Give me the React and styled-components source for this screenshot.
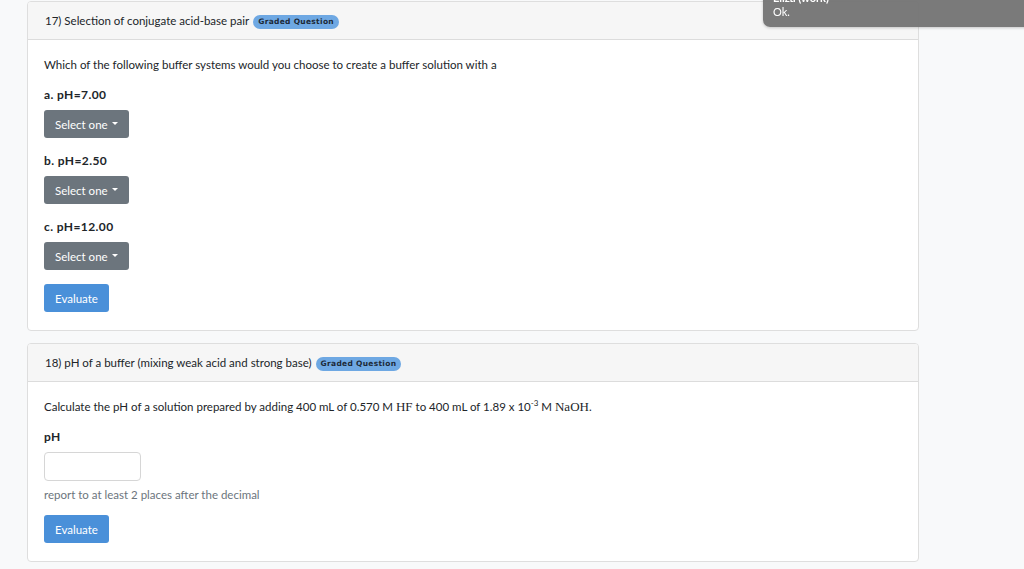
import React from "react";
import styled, { createGlobalStyle } from "styled-components";

const GlobalStyle = createGlobalStyle`
  html, body {
    margin: 0;
    padding: 0;
    background: #f8f9fa;
    font-family: "Lato", "Noto Sans", sans-serif;
    color: #212529;
  }
`;

const Page = styled.div`
  padding: 1px 0 0 27px;
  display: flex;
  flex-direction: column;
  gap: 12px;
`;

const Card = styled.div`
  width: 892px;
  box-sizing: border-box;
  background: #fff;
  border: 1px solid #dedede;
  border-radius: 4px;
  overflow: hidden;
`;

const CardHeader = styled.div`
  height: 38px;
  box-sizing: border-box;
  background: #f6f6f6;
  border-bottom: 1px solid #dcdcdc;
  padding: 0 17px;
  display: flex;
  align-items: center;
  gap: 4px;
  font-size: 11.5px;
  color: #212529;
`;

const Badge = styled.span`
  background: #6ea8e3;
  color: #1d2a38;
  font-family: "DejaVu Sans", sans-serif;
  font-weight: 700;
  font-size: 7.5px;
  letter-spacing: 0.3px;
  padding: 2px 5px;
  border-radius: 8px;
  line-height: 10px;
  margin-top: 2px;
`;

const CardBody = styled.div`
  padding: 18px 16px 18px 16px;
  font-size: 11.5px;
`;

const Prompt = styled.p`
  margin: 0 0 16px 0;
  line-height: 14px;
`;

const Part = styled.div`
  display: flex;
  flex-direction: column;
  align-items: flex-start;
  margin-bottom: ${(p) => p.$gap}px;
`;

const PartLabel = styled.div`
  font-weight: 700;
  font-size: 12px;
  letter-spacing: 0.4px;
  line-height: 14px;
  margin-bottom: 8px;
`;

const SelectBtn = styled.button`
  background: #6c757d;
  color: #fff;
  border: none;
  border-radius: 3px;
  height: 28px;
  padding: 0 11px;
  font-family: inherit;
  font-size: 11.5px;
  display: flex;
  align-items: center;
  gap: 4px;
`;

const Caret = styled.span`
  width: 0;
  height: 0;
  border-left: 3px solid transparent;
  border-right: 3px solid transparent;
  border-top: 3px solid #fff;
  margin-top: -1px;
`;

const EvalBtn = styled.button`
  display: block;
  background: #4a90d9;
  color: #fff;
  border: none;
  border-radius: 3px;
  height: 28px;
  width: 65px;
  font-family: inherit;
  font-size: 11.5px;
  padding: 0;
`;

const Serif = styled.span`
  font-family: "Liberation Serif", serif;
  font-size: 13px;
`;

const Sup = styled.sup`
  font-size: 8px;
  line-height: 0;
`;

const Input = styled.input`
  width: 97px;
  height: 29px;
  box-sizing: border-box;
  border: 1px solid #d6d6d6;
  border-radius: 4px;
  margin: 0 0 7px 0;
`;

const Help = styled.div`
  color: #6c757d;
  font-size: 11.5px;
  line-height: 14px;
  margin-bottom: 13px;
`;

const Toast = styled.div`
  position: fixed;
  top: -9px;
  left: 763px;
  width: 280px;
  height: 36px;
  box-sizing: border-box;
  background: rgba(115, 115, 115, 0.95);
  border-radius: 7px;
  box-shadow: 0 1px 3px rgba(0, 0, 0, 0.2);
  padding: 0 10px;
  color: #fff;
  font-size: 11px;
  line-height: 14px;
`;

const ToastTitle = styled.div`
  font-weight: 700;
`;

const parts17 = ["a. pH=7.00", "b. pH=2.50", "c. pH=12.00"];

export default function App() {
  return (
    <>
      <GlobalStyle />
      <Page>
        <Card>
          <CardHeader>
            17) Selection of conjugate acid-base pair <Badge>Graded Question</Badge>
          </CardHeader>
          <CardBody>
            <Prompt>
              Which of the following buffer systems would you choose to create a buffer solution with a
            </Prompt>
            {parts17.map((p, i) => (
              <Part key={p} $gap={i === parts17.length - 1 ? 14 : 16}>
                <PartLabel>{p}</PartLabel>
                <SelectBtn>
                  Select one <Caret />
                </SelectBtn>
              </Part>
            ))}
            <EvalBtn>Evaluate</EvalBtn>
          </CardBody>
        </Card>
        <Card>
          <CardHeader>
            18) pH of a buffer (mixing weak acid and strong base) <Badge>Graded Question</Badge>
          </CardHeader>
          <CardBody>
            <Prompt>
              Calculate the pH of a solution prepared by adding 400 mL of 0.570 M <Serif>HF</Serif> to 400 mL of
              1.89 x 10<Sup>-3</Sup> M <Serif>NaOH</Serif>.
            </Prompt>
            <Part $gap={0}>
              <PartLabel>pH</PartLabel>
              <Input />
              <Help>report to at least 2 places after the decimal</Help>
            </Part>
            <EvalBtn>Evaluate</EvalBtn>
          </CardBody>
        </Card>
      </Page>
      <Toast>
        <ToastTitle>Eliza (work)</ToastTitle>
        Ok.
      </Toast>
    </>
  );
}
